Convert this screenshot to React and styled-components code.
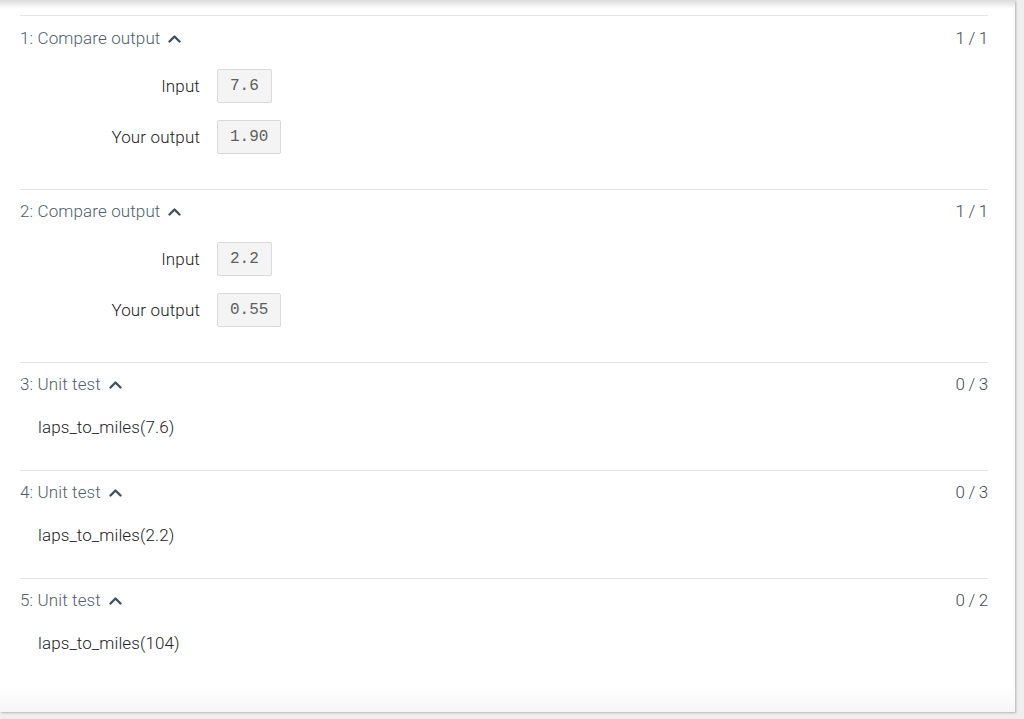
import React from "react";
import styled, { createGlobalStyle } from "styled-components";

const Global = createGlobalStyle`
  html, body { margin: 0; padding: 0; background: #eeeeee; }
  body { font-family: Roboto, "Liberation Sans", Arial, sans-serif; overflow: hidden; }
`;

const Page = styled.div`
  width: 1024px;
  height: 719px;
  background: #eeeeee;
`;

const Card = styled.div`
  width: 1015px;
  height: 712px;
  background: linear-gradient(to bottom, #ffffff 0, #ffffff 688px, #f6f6f6 712px);
  box-shadow: 1px 1px 2px rgba(0, 0, 0, 0.25);
  display: flex;
  flex-direction: column;
`;

const TopShade = styled.div`
  height: 9px;
  flex: none;
  background: linear-gradient(to bottom, rgba(0, 0, 0, 0.14), rgba(0, 0, 0, 0));
  margin-bottom: 6px;
`;

const Section = styled.section`
  margin: 0 27px 0 20px;
  border-top: 1px solid #e4e4e4;
  padding: ${(p) => (p.$first ? "12px" : "11px")} 0 ${(p) => p.$bottom}px;
`;

const Header = styled.div`
  display: flex;
  align-items: center;
  justify-content: space-between;
  height: 20px;
  font-size: 17px;
  font-weight: 300;
  color: #4e5f6a;
`;

const Title = styled.div`
  display: flex;
  align-items: center;
  gap: 8px;
  letter-spacing: 0.12px;
`;

const Score = styled.div`
  color: #3f4c55;
  letter-spacing: -0.3px;
`;

const Rows = styled.div`
  display: grid;
  grid-template-columns: 180px auto;
  justify-content: start;
  align-items: center;
  column-gap: 17px;
  row-gap: 17px;
  margin-top: 21px;
`;

const Label = styled.div`
  text-align: right;
  font-size: 17px;
  font-weight: 300;
  letter-spacing: 0.15px;
  color: #222222;
`;

const Value = styled.div`
  justify-self: start;
  box-sizing: border-box;
  height: 34px;
  display: flex;
  align-items: center;
  font-family: "Liberation Mono", "DejaVu Sans Mono", monospace;
  font-size: 16px;
  color: #5e5e5e;
  background: #f4f4f4;
  border: 1px solid #d9d9d9;
  border-radius: 2px;
  padding: 0 12px;
`;

const Code = styled.div`
  margin-top: 23px;
  margin-left: 18px;
  height: 20px;
  line-height: 20px;
  font-size: 17px;
  font-weight: 300;
  letter-spacing: 0.1px;
  color: #222222;
`;

const Chevron = () => (
  <svg width="13" height="9" viewBox="0 0 13 9">
    <polyline
      points="1.5,7.5 6.5,2.5 11.5,7.5"
      fill="none"
      stroke="#42515c"
      strokeWidth="2.4"
      strokeLinecap="round"
      strokeLinejoin="round"
    />
  </svg>
);

const compares = [
  { n: 1, input: "7.6", output: "1.90", score: "1 / 1" },
  { n: 2, input: "2.2", output: "0.55", score: "1 / 1" },
];

const units = [
  { n: 3, call: "laps_to_miles(7.6)", score: "0 / 3" },
  { n: 4, call: "laps_to_miles(2.2)", score: "0 / 3" },
  { n: 5, call: "laps_to_miles(104)", score: "0 / 2" },
];

export default function App() {
  return (
    <Page>
      <Global />
      <Card>
        <TopShade />
        {compares.map((c, i) => (
          <Section key={c.n} $first={i === 0} $bottom={35}>
            <Header>
              <Title>
                {c.n}: Compare output <Chevron />
              </Title>
              <Score>{c.score}</Score>
            </Header>
            <Rows>
              <Label>Input</Label>
              <Value>{c.input}</Value>
              <Label>Your output</Label>
              <Value>{c.output}</Value>
            </Rows>
          </Section>
        ))}
        {units.map((u) => (
          <Section key={u.n} $bottom={33}>
            <Header>
              <Title>
                {u.n}: Unit test <Chevron />
              </Title>
              <Score>{u.score}</Score>
            </Header>
            <Code>{u.call}</Code>
          </Section>
        ))}
      </Card>
    </Page>
  );
}
